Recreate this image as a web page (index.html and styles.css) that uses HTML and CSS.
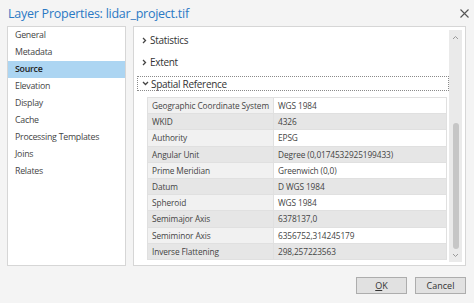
FILE: index.html
```html
<!DOCTYPE html>
<html>
<head>
<meta charset="utf-8">
<link rel="stylesheet" href="styles.css">
</head>
<body>
<div class="dialog">
  <div class="titlebar">
    <span class="title">Layer Properties: lidar_project.tif</span>
    <svg class="close" width="9" height="9" viewBox="0 0 9 9"><path d="M0.5 0.5L8.5 8.5M8.5 0.5L0.5 8.5" stroke="#555" stroke-width="1.1"/></svg>
  </div>
  <div class="main">
    <ul class="nav">
      <li>General</li>
      <li>Metadata</li>
      <li class="active">Source</li>
      <li>Elevation</li>
      <li>Display</li>
      <li>Cache</li>
      <li>Processing Templates</li>
      <li>Joins</li>
      <li>Relates</li>
    </ul>
    <div class="content">
      <div class="scrollarea">
        <div class="section"><svg class="chev" width="5" height="7" viewBox="0 0 5 7"><path d="M1 1L3.5 3.5L1 6" fill="none" stroke="#444" stroke-width="1.3"/></svg>Statistics</div>
        <div class="section"><svg class="chev" width="5" height="7" viewBox="0 0 5 7"><path d="M1 1L3.5 3.5L1 6" fill="none" stroke="#444" stroke-width="1.3"/></svg>Extent</div>
        <div class="section open"><svg class="chev down" width="7" height="5" viewBox="0 0 7 5"><path d="M1 1L3.5 3.5L6 1" fill="none" stroke="#444" stroke-width="1.3"/></svg>Spatial Reference</div>
        <table class="props">
          <tr><td>Geographic Coordinate System</td><td>WGS 1984</td></tr>
          <tr><td>WKID</td><td>4326</td></tr>
          <tr><td>Authority</td><td>EPSG</td></tr>
          <tr><td>Angular Unit</td><td>Degree (0,0174532925199433)</td></tr>
          <tr><td>Prime Meridian</td><td>Greenwich (0,0)</td></tr>
          <tr><td>Datum</td><td>D WGS 1984</td></tr>
          <tr><td>Spheroid</td><td>WGS 1984</td></tr>
          <tr><td>Semimajor Axis</td><td>6378137,0</td></tr>
          <tr><td>Semiminor Axis</td><td>6356752,314245179</td></tr>
          <tr><td>Inverse Flattening</td><td>298,257223563</td></tr>
        </table>
      </div>
      <div class="scrollbar">
        <svg class="arrow" width="7" height="5" viewBox="0 0 7 5"><path d="M1 4L3.5 1.5L6 4" fill="none" stroke="#999" stroke-width="1"/></svg>
        <div class="track"><div class="thumb"></div></div>
        <svg class="arrow" width="7" height="5" viewBox="0 0 7 5"><path d="M1 1L3.5 3.5L6 1" fill="none" stroke="#999" stroke-width="1"/></svg>
      </div>
    </div>
  </div>
  <div class="footer">
    <button class="btn"><u>O</u>K</button>
    <button class="btn">Cancel</button>
  </div>
</div>
</body>
</html>
```
FILE: styles.css
```css
* { box-sizing: border-box; }
html, body { margin: 0; padding: 0; }
body {
  width: 474px;
  height: 303px;
  background: #f4f4f4;
  font-family: "Open Sans", "Noto Sans", sans-serif;
  overflow: hidden;
}
.dialog {
  display: flex;
  flex-direction: column;
  height: 303px;
}
.titlebar {
  height: 26px;
  display: flex;
  align-items: center;
  justify-content: space-between;
  padding: 0 5px 0 8px;
}
.title {
  color: #2b79c4;
  font-size: 12.5px;
  letter-spacing: -0.25px;
  margin-top: 1px;
}
.main {
  display: flex;
  gap: 7px;
  height: 240px;
  padding: 0 8px 0 7px;
}
.nav {
  list-style: none;
  margin: 0;
  padding: 0;
  width: 119px;
  background: #fff;
  border: 1px solid #d6d6d6;
  font-size: 8.8px;
  color: #444;
}
.nav li {
  height: 17px;
  line-height: 17px;
  padding-left: 7px;
  letter-spacing: -0.25px;
}
.nav li.active {
  background: #acd5f2;
  color: #222;
  font-weight: 600;
}
.content {
  flex: 1;
  display: flex;
  background: #fff;
  border: 1px solid #d6d6d6;
  padding: 3px;
}
.scrollarea {
  flex: 1;
  padding-top: 1px;
}
.section {
  height: 18px;
  display: flex;
  align-items: center;
  font-size: 10px;
  color: #333;
  padding-left: 4px;
  margin-bottom: 4px;
  border: 1px solid transparent;
  letter-spacing: -0.3px;
}
.section + .section { margin-bottom: 5px; }
.section.open {
  height: 15px;
  border: 1px dotted #8a8a8a;
  margin-bottom: 6px;
  padding-left: 4px;
}
.chev { margin-right: 3px; }
.chev.down { margin-right: 2px; }
.props {
  margin-left: 10px;
  width: 300px;
  border-collapse: collapse;
  font-size: 8.3px;
  color: #444;
}
.props td {
  height: 16.2px;
  padding: 0 0 0 4px;
  border: 1px solid #e0e0e0;
  background: #fff;
  white-space: nowrap;
  letter-spacing: -0.1px;
}
.props td:first-child {
  width: 126px;
  background: #f1f1f1;
}
.props tr:nth-child(even) td { background: #e6e6e6; }
.scrollbar {
  width: 13px;
  background: #eaeaea;
  display: flex;
  flex-direction: column;
  align-items: center;
  padding: 5px 0 4px;
}
.arrow { flex: none; }
.track {
  flex: 1;
  width: 100%;
  display: flex;
  flex-direction: column;
  align-items: center;
  padding: 83px 0 4px;
}
.thumb {
  width: 6px;
  flex: 1;
  background: #c6c6c6;
  border-radius: 3px;
}
.footer {
  flex: 1;
  display: flex;
  justify-content: flex-end;
  align-items: flex-start;
  gap: 8px;
  padding: 11px 8px 0 0;
}
.btn {
  width: 51px;
  height: 17px;
  background: #e1e1e1;
  border: 1px solid #adadad;
  font-family: "Open Sans", "Noto Sans", sans-serif;
  font-size: 9px;
  color: #333;
  padding: 0;
  line-height: 15px;
}
```
